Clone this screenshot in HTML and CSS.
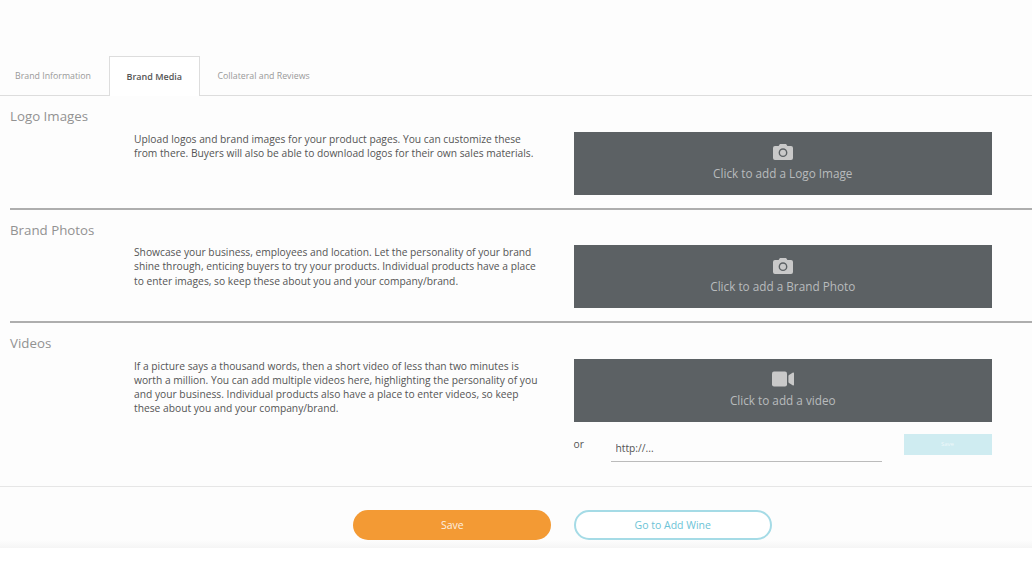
FILE: index.html
```html
<!DOCTYPE html>
<html lang="en">
<head>
    <meta charset="UTF-8">
    <title>Brand Media</title>
    <link rel="stylesheet" href="styles.css">
</head>
<body>
    <nav class="tabs">
        <a class="tab">Brand Information</a>
        <a class="tab tab-active">Brand Media</a>
        <a class="tab">Collateral and Reviews</a>
    </nav>

    <section class="media-section">
        <h2>Logo Images</h2>
        <div class="media-row">
            <p class="media-text">Upload logos and brand images for your product pages. You can customize these from there. Buyers will also be able to download logos for their own sales materials.</p>
            <div class="media-side">
                <div class="upload-box">
                    <svg class="upload-icon" width="20" height="16" viewBox="0 0 20 16"><path fill="#c9c9c9" fill-rule="evenodd" d="M2 2h3.600l1-1.600C6.800.1 7 0 7.400 0h5.200c.4 0 .6.1.8.4l1 1.600H18a2 2 0 0 1 2 2V14a2 2 0 0 1-2 2H2a2 2 0 0 1-2-2V4a2 2 0 0 1 2-2zm8 2.300a4.400 4.400 0 1 0 0 8.800 4.400 4.400 0 0 0 0-8.800zm0 1.400a3 3 0 1 1 0 6 3 3 0 0 1 0-6z"/></svg>
                    <span>Click to add a Logo Image</span>
                </div>
            </div>
        </div>
    </section>

    <section class="media-section">
        <h2>Brand Photos</h2>
        <div class="media-row">
            <p class="media-text">Showcase your business, employees and location. Let the personality of your brand shine through, enticing buyers to try your products. Individual products have a place to enter images, so keep these about you and your company/brand.</p>
            <div class="media-side">
                <div class="upload-box">
                    <svg class="upload-icon" width="20" height="16" viewBox="0 0 20 16"><path fill="#c9c9c9" fill-rule="evenodd" d="M2 2h3.600l1-1.600C6.800.1 7 0 7.400 0h5.200c.4 0 .6.1.8.4l1 1.600H18a2 2 0 0 1 2 2V14a2 2 0 0 1-2 2H2a2 2 0 0 1-2-2V4a2 2 0 0 1 2-2zm8 2.300a4.400 4.400 0 1 0 0 8.800 4.400 4.400 0 0 0 0-8.800zm0 1.400a3 3 0 1 1 0 6 3 3 0 0 1 0-6z"/></svg>
                    <span>Click to add a Brand Photo</span>
                </div>
            </div>
        </div>
    </section>

    <section class="media-section media-section-last">
        <h2>Videos</h2>
        <div class="media-row">
            <p class="media-text">If a picture says a thousand words, then a short video of less than two minutes is worth a million. You can add multiple videos here, highlighting the personality of you and your business. Individual products also have a place to enter videos, so keep these about you and your company/brand.</p>
            <div class="media-side">
                <div class="upload-box">
                    <svg class="upload-icon" width="22" height="16" viewBox="0 0 22 16"><rect fill="#c9c9c9" width="15" height="15" y=".5" rx="2"/><path fill="#c9c9c9" d="M21 1.500c.6-.2 1 .1 1 .7v11.600c0 .6-.4.900-1 .7l-4-2.500c-.4-.3-.6-.6-.6-1V5c0-.4.2-.7.6-1z"/></svg>
                    <span>Click to add a video</span>
                </div>
                <div class="url-row">
                    <span class="url-or">or</span>
                    <input class="url-input" type="text" value="http://...">
                    <button type="button" class="url-save">Save</button>
                </div>
            </div>
        </div>
    </section>

    <footer class="actions">
        <button type="button" class="btn btn-save">Save</button>
        <button type="button" class="btn btn-next">Go to Add Wine</button>
    </footer>
    <div class="page-shade"></div>
    <div class="page-rest"></div>
</body>
</html>
```

FILE: styles.css
```css
body {
    margin: 0;
    padding-top: 56px;
    overflow: hidden;
    background: #fdfdfd;
    font-family: "Open Sans", sans-serif;
    color: #555;
}
.tabs {
    display: flex;
    height: 40px;
    box-sizing: border-box;
    border-bottom: 1px solid #ddd;
}
.tab {
    padding: 13px 18px 0;
    font-size: 8.800px;
    line-height: 14px;
    color: #999;
}
.tab:first-child {
    padding-left: 15px;
}
.tab-active {
    height: 40px;
    box-sizing: border-box;
    background: #fff;
    border: 1px solid #ddd;
    border-bottom: none;
    padding: 13px 16.500px 0;
    font-size: 9px;
    font-weight: 600;
    color: #555;
}
.media-section {
    height: 113.500px;
    box-sizing: border-box;
    margin-left: 10px;
    padding-top: 10px;
    border-bottom: 2px solid #aeaeae;
}
.media-section-last {
    height: 163px;
    border-bottom: none;
}
.media-section h2 {
    margin: 0 0 5.500px;
    font-size: 13.300px;
    font-weight: 400;
    line-height: 20px;
    color: #929292;
}
.media-row {
    display: flex;
    padding-left: 124px;
}
.media-text {
    width: 410px;
    margin: 0 29.500px 0 0;
    font-size: 10.250px;
    line-height: 14.300px;
    color: #555;
}
.media-side {
    width: 418.500px;
}
.upload-box {
    display: flex;
    flex-direction: column;
    align-items: center;
    height: 63px;
    box-sizing: border-box;
    padding-top: 12.500px;
    background: #5c6164;
    color: #b8bbbd;
    font-size: 11.750px;
    line-height: 18px;
}
.upload-icon {
    display: block;
    margin-bottom: 3.500px;
}
.url-row {
    display: flex;
    align-items: flex-start;
    margin-top: 12px;
}
.url-or {
    width: 37px;
    margin-top: 3px;
    font-size: 10.250px;
    line-height: 14px;
}
.url-input {
    width: 271px;
    height: 28px;
    box-sizing: border-box;
    margin-right: 22px;
    padding: 2px 5px 0;
    border: none;
    border-bottom: 1px solid #bbb;
    background: transparent;
    font-family: inherit;
    font-size: 10.250px;
    color: #555;
    outline: none;
}
.url-save {
    width: 88px;
    height: 21px;
    padding: 0;
    border: none;
    background: #cfecf1;
    color: #eef8fa;
    font-family: inherit;
    font-size: 6px;
}
.actions {
    display: flex;
    justify-content: center;
    gap: 22.500px;
    padding: 23px 0 0 93px;
    border-top: 1px solid #e6e6e6;
}
.btn {
    width: 198px;
    height: 30px;
    box-sizing: border-box;
    border-radius: 15px;
    font-family: inherit;
    font-size: 10.500px;
    padding: 0;
}
.btn-save {
    border: none;
    background: #f39a34;
    color: #fdf0e0;
}
.btn-next {
    border: 2px solid #a5dbe6;
    background: #fff;
    color: #6cc3d6;
}
.page-shade {
    height: 8px;
    background: linear-gradient(#fdfdfd, #f5f5f5);
}
.page-rest {
    height: 32px;
    background: #fff;
}
```
